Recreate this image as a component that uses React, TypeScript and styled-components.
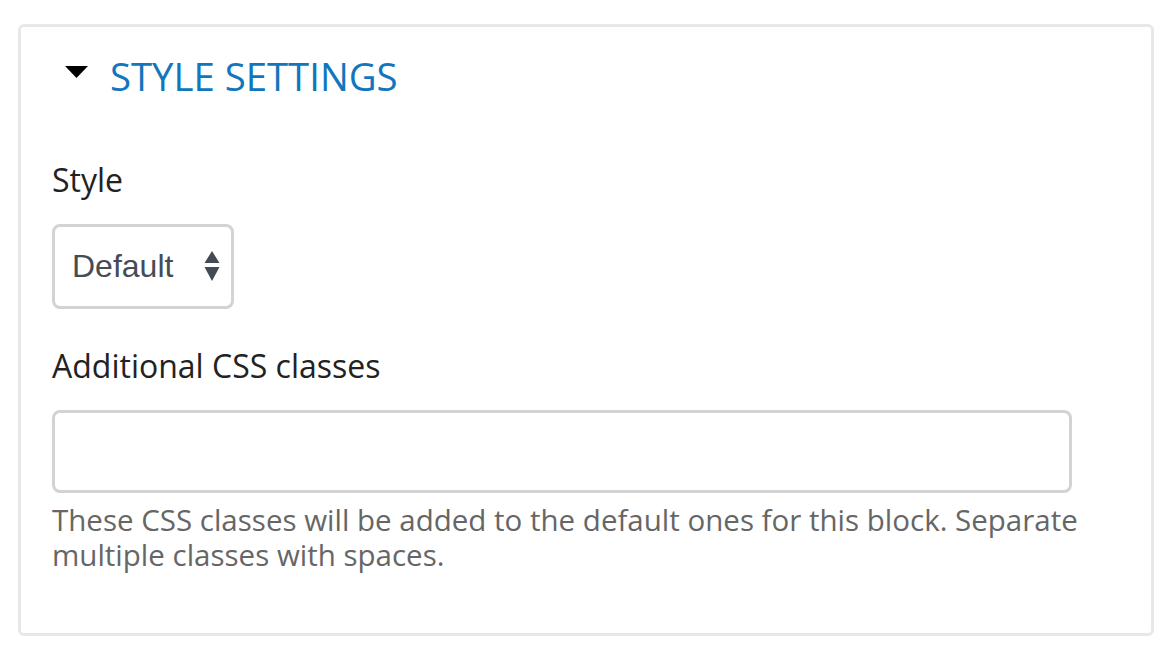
import React from "react";
import styled, { createGlobalStyle } from "styled-components";

const Global = createGlobalStyle`
  html, body { margin: 0; padding: 0; background: #ffffff; }
  body { font-family: "Open Sans", "Liberation Sans", sans-serif; }
`;

const Page = styled.div`
  padding: 24px 20px 24px 18px;
`;

const Panel = styled.fieldset`
  margin: 0;
  box-sizing: border-box;
  width: 1136px;
  height: 612px;
  border: 3px solid #e8e8e8;
  border-radius: 6px;
  padding: 25px 31px 0 31px;
  display: flex;
  flex-direction: column;
`;

const Summary = styled.div`
  display: flex;
  align-items: center;
  gap: 22px;
  height: 48px;
  padding-left: 13px;
`;

const Caret = styled.svg`
  width: 23px;
  height: 12px;
  flex: none;
  margin-top: -8px;
`;

const Title = styled.span`
  font-family: "Open Sans", sans-serif;
  font-size: 38.3px;
  line-height: 48px;
  color: #1276bc;
`;

const Field = styled.div<{ $top: number }>`
  display: flex;
  flex-direction: column;
  align-items: flex-start;
  margin-top: ${(p) => p.$top}px;
`;

const Label = styled.label<{ $gap: number }>`
  font-family: "Open Sans", sans-serif;
  font-size: 32px;
  line-height: 40px;
  color: #222222;
  margin-bottom: ${(p) => p.$gap}px;
`;

const SelectBox = styled.div`
  box-sizing: border-box;
  width: 182px;
  height: 85px;
  border: 3px solid #d3d3d3;
  border-radius: 8px;
  display: flex;
  align-items: center;
  justify-content: space-between;
  padding: 0 11px 0 17px;
  font-family: "Liberation Sans", Arial, sans-serif;
  font-size: 32px;
  color: #454c55;
`;

const Arrows = styled.svg`
  width: 16px;
  height: 31px;
  flex: none;
`;

const TextInput = styled.input`
  box-sizing: border-box;
  width: 1020px;
  height: 83px;
  border: 3px solid #d3d3d3;
  border-radius: 8px;
  outline: none;
  background: #fff;
  padding: 0 16px;
  font-size: 28px;
`;

const Help = styled.div`
  font-family: "Open Sans", sans-serif;
  font-size: 29.5px;
  line-height: 35px;
  color: #666666;
  margin-top: 9px;
  width: 1045px;
`;

export default function App() {
  return (
    <>
      <Global />
      <Page>
        <Panel>
          <Summary>
            <Caret viewBox="0 0 23 12">
              <polygon points="0,0 23,0 11.5,12" fill="#000" />
            </Caret>
            <Title>STYLE SETTINGS</Title>
          </Summary>
          <Field $top={60}>
            <Label $gap={24}>Style</Label>
            <SelectBox>
              <span>Default</span>
              <Arrows viewBox="0 0 16 31">
                <polygon points="8,0 15.5,12 0.5,12" fill="#444b54" />
                <polygon points="0.5,16 15.5,16 8,30" fill="#444b54" />
              </Arrows>
            </SelectBox>
          </Field>
          <Field $top={37}>
            <Label $gap={24}>Additional CSS classes</Label>
            <TextInput type="text" />
            <Help>
              These CSS classes will be added to the default ones for this block. Separate multiple classes with spaces.
            </Help>
          </Field>
        </Panel>
      </Page>
    </>
  );
}
